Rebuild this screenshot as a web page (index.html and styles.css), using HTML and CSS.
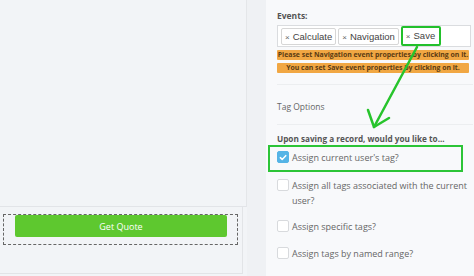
FILE: index.html
```html
<!DOCTYPE html>
<html>
<head>
<meta charset="utf-8">
<link rel="stylesheet" href="styles.css">
</head>
<body>
<div class="page">
  <div class="left">
    <div class="left-top"></div>
    <div class="left-bottom">
      <div class="drop">
        <button class="quote">Get Quote</button>
      </div>
    </div>
  </div>
  <div class="strip"></div>
  <div class="right">
    <div class="label">Events:</div>
    <div class="tagbox">
      <span class="tag"><span class="x">×</span>Calculate</span>
      <span class="tag"><span class="x">×</span>Navigation</span>
      <span class="tag hl"><span class="x">×</span>Save</span>
    </div>
    <div class="warn">Please set Navigation event properties by clicking on it.</div>
    <div class="warn">You can set Save event properties by clicking on it.</div>
    <div class="section">Tag Options</div>
    <div class="question">Upon saving a record, would you like to...</div>
    <div class="opt selected"><span class="cb checked"><svg viewBox="0 0 12 12" width="11" height="11"><path d="M2.8 6.2 L5 8.3 L9.3 3.8" fill="none" stroke="#fff" stroke-width="1.8" stroke-linecap="round" stroke-linejoin="round"/></svg></span><span class="txt">Assign current user's tag?</span></div>
    <div class="opt two"><span class="cb"></span><span class="txt">Assign all tags associated with the current user?</span></div>
    <div class="opt three"><span class="cb"></span><span class="txt">Assign specific tags?</span></div>
    <div class="opt four"><span class="cb"></span><span class="txt">Assign tags by named range?</span></div>
  </div>
  <svg class="arrow" width="474" height="276" viewBox="0 0 474 276">
    <path d="M417 47 L374 127" stroke="#27c42c" stroke-width="2.5" fill="none" stroke-linecap="round"/>
    <path d="M368 110 L374 127 L389 118" stroke="#27c42c" stroke-width="2.5" fill="none" stroke-linecap="round" stroke-linejoin="round"/>
  </svg>
</div>
</body>
</html>
```

FILE: styles.css
```css
* { box-sizing: border-box; }
html, body { margin: 0; padding: 0; }
body { width: 474px; height: 276px; overflow: hidden; background: #f4f5f7; font-family: "Open Sans", sans-serif; }
.page { position: relative; display: flex; width: 474px; height: 276px; }
.left { width: 247px; background: #f2f4f7; display: flex; flex-direction: column; }
.left-top { height: 207px; border-right: 1px solid #e4e6e9; border-bottom: 1px solid #e2e4e8; }
.left-bottom { height: 67px; border-right: 1px solid #e2e4e7; border-bottom: 1px solid #e2e4e7; margin-right: 4px; padding: 7px 0 0 3px; }
.drop { width: 235px; height: 31px; border: 1px dashed #666; padding: 0 0 0 11px; }
.quote { display: block; width: 212px; height: 22px; margin-top: 0; border: none; border-radius: 2px; background: #5ec82f; color: #fff; font-family: "Open Sans", sans-serif; font-size: 9px; padding: 0; }
.strip { width: 19px; background: #eff1f4; }
.right { width: 208px; background: #f8f9fb; padding: 9px 3px 0 11px; color: #555; }
.label { font-size: 8.5px; font-weight: 700; color: #555; line-height: 13px; }
.tagbox { margin-top: 3px; height: 22px; width: 194px; background: #fff; border: 1px solid #dadcdf; display: flex; align-items: center; gap: 2px; padding-left: 3px; }
.tag { font-family: "Liberation Sans", Arial, sans-serif; font-size: 9.5px; color: #444; border: 1px solid #d6d6d6; border-radius: 2px; height: 17px; line-height: 15px; padding: 0 3px; white-space: nowrap; }
.tag .x { font-size: 8px; color: #666; margin-right: 3px; }
.tag.hl { border: 2px solid #22c02b; line-height: 15px; height: 20px; padding: 0 4px 0 3px; }
.warn { margin-top: 3px; width: 192px; height: 10px; background: #f1a743; color: #5b3b12; font-size: 6.9px; font-weight: 700; text-align: center; line-height: 10px; white-space: nowrap; border-radius: 1px; overflow: hidden; }
.section { margin-top: 11px; border-top: 1px solid #eceef0; border-bottom: 1px solid #eceef0; height: 41px; padding-top: 3px; line-height: 37px; font-size: 8.5px; color: #666; width: 196px; }
.question { margin-top: 7px; font-size: 8.2px; font-weight: 700; color: #555; line-height: 13px; white-space: nowrap; }
.opt { display: flex; align-items: flex-start; width: 196px; font-size: 9px; color: #666; line-height: 15px; }
.opt .cb { flex: none; width: 12px; height: 12px; border: 1px solid #d8dadd; border-radius: 2px; background: #fff; margin: 1px 3px 0 0; display: flex; align-items: center; justify-content: center; }
.opt .cb.checked { background: #55b4e6; border-color: #55b4e6; }
.opt.selected { margin-left: -9px; margin-top: 0; height: 27px; padding: 3px 0 0 7px; border: 2px solid #2cc437; width: 195px; }
.opt.two { margin-top: 6px; }
.opt.three { margin-top: 11px; }
.opt.four { margin-top: 12px; }
.arrow { position: absolute; left: 0; top: 0; pointer-events: none; }
```
